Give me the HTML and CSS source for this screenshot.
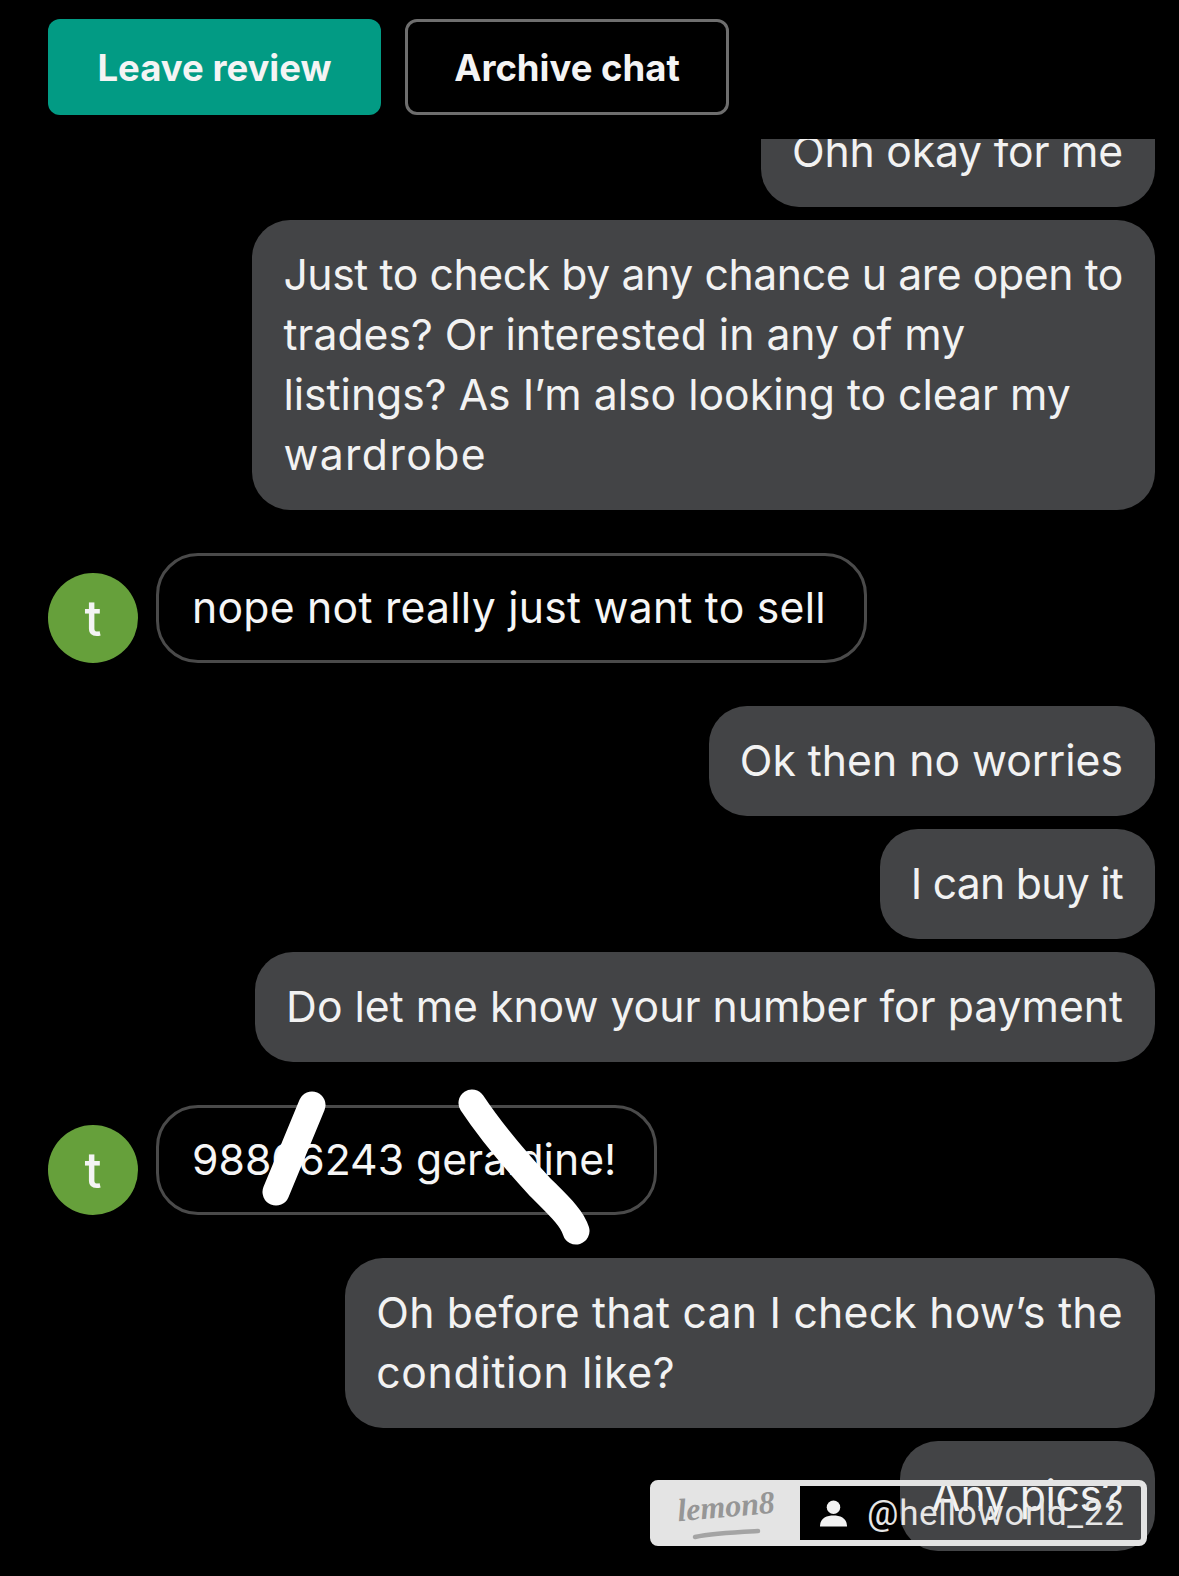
FILE: index.html
```html
<!DOCTYPE html>
<html lang="en">
<head>
<meta charset="utf-8">
<title>Chat</title>
<link rel="stylesheet" href="styles.css">
</head>
<body>
<div class="page">
  <div class="actions">
    <button class="btn btn-primary">Leave review</button>
    <button class="btn btn-outline">Archive chat</button>
  </div>
  <div class="chat">
    <div class="msg sent snug">Ohh okay for me</div>
    <div class="msg sent"><span class="tight">Just to check by any chance u are open to</span><br>trades? Or interested in any of my<br>listings? As I’m also looking to clear my<br><span class="wide">wardrobe</span></div>
    <div class="row">
      <div class="avatar">t</div>
      <div class="msg received loose">nope not really just want to sell</div>
    </div>
    <div class="msg sent after-received">Ok then no worries</div>
    <div class="msg sent tighter">I can buy it</div>
    <div class="msg sent">Do let me know your number for payment</div>
    <div class="row">
      <div class="avatar">t</div>
      <div class="msg received">98806243 geraldine!</div>
    </div>
    <div class="msg sent after-received loose">Oh before that can I check how’s the<br><span class="roomy">condition like?</span></div>
    <div class="msg sent tight">Any pics?</div>
  </div>
  <svg class="scribble" viewBox="0 0 1179 1576" width="1179" height="1576" aria-hidden="true">
    <path d="M312 1105 L276 1192" />
    <path d="M472 1103 C490 1130 515 1160 540 1187 C560 1207 572 1218 576 1231" />
  </svg>
  <div class="watermark">
    <div class="wm-logo">
      <span class="wm-logo-text">lemon8</span>
      <svg class="wm-swoosh" viewBox="0 0 70 12" width="70" height="12" aria-hidden="true"><path d="M3 9 C20 5 45 4 66 3" /></svg>
    </div>
    <div class="wm-user">
      <svg class="wm-icon" viewBox="0 0 26 26" width="27" height="27" aria-hidden="true"><circle cx="13" cy="7" r="6.5"/><path d="M0 25.500 C0 17 7 15 13 15 C19 15 26 17 26 25.500 Z"/></svg>
      <span class="wm-name">@helloworld_22</span>
    </div>
  </div>
</div>
</body>
</html>
```

FILE: styles.css
```css
* { box-sizing: border-box; }
html, body { margin: 0; padding: 0; background: #000; }
.page {
  position: relative;
  width: 1179px;
  height: 1576px;
  overflow: hidden;
  display: flex;
  flex-direction: column;
  background: #000;
  font-family: Inter, "Liberation Sans", sans-serif;
  color: #f2f2f2;
}
.actions {
  display: flex;
  gap: 24px;
  padding: 19px 48px 24px;
  flex: none;
}
.btn {
  height: 96px;
  border-radius: 12px;
  font-family: Inter, sans-serif;
  font-size: 36.5px;
  font-weight: 700;
  color: #f4f4f4;
  background: transparent;
  border: 0;
  padding: 2px 0 0;
}
.btn-primary { width: 333px; background: #029b84; }
.btn-outline { width: 324px; border: 3px solid #6e6e6e; }
.chat {
  flex: 1;
  min-height: 0;
  overflow: hidden;
  display: flex;
  flex-direction: column;
  justify-content: flex-end;
  align-items: flex-end;
  gap: 13px;
  padding: 0 24px 25px 48px;
}
.msg {
  flex: none;
  font-size: 42.7px;
  line-height: 60px;
  padding: 25px 32px 25px 31px;
  border-radius: 38px;
  white-space: nowrap;
}
.snug { letter-spacing: -0.2px; }
.tight { letter-spacing: -0.4px; }
.tighter { letter-spacing: -0.75px; }
.loose { letter-spacing: 0.25px; }
.roomy { letter-spacing: 0.7px; }
.wide { letter-spacing: 1.4px; }
.sent { background: #434446; }
.after-received { margin-top: 30px; }
.row {
  flex: none;
  align-self: stretch;
  display: flex;
  align-items: flex-end;
  gap: 18px;
  margin-top: 30px;
}
.received {
  border: 3px solid #4a4a4a;
  padding: 22px 38px 22px 33px;
  border-radius: 42px;
  color: #f6f6f6;
}
.avatar {
  flex: none;
  width: 90px;
  height: 90px;
  border-radius: 50%;
  background: #66a03b;
  display: flex;
  align-items: center;
  justify-content: center;
  font-size: 50px;
  font-weight: 500;
  color: #f4f4f4;
}
.scribble {
  position: absolute;
  left: 0;
  top: 0;
  pointer-events: none;
}
.scribble path {
  fill: none;
  stroke: #fff;
  stroke-width: 27;
  stroke-linecap: round;
  stroke-linejoin: round;
}
.watermark {
  position: absolute;
  left: 650px;
  top: 1480px;
  width: 497px;
  height: 66px;
  display: flex;
  border: 6px solid #e4e4e4;
  border-radius: 8px;
}
.wm-logo {
  flex: none;
  width: 144px;
  background: #e4e4e4;
  position: relative;
  display: flex;
  align-items: center;
  justify-content: center;
}
.wm-logo-text {
  font-family: "Liberation Serif", serif;
  font-style: italic;
  font-weight: 700;
  font-size: 32px;
  line-height: 32px;
  color: #969696;
  margin-top: -14px;
  margin-left: -4px;
  transform: rotate(-5deg);
}
.wm-swoosh {
  position: absolute;
  left: 36px;
  bottom: 0;
}
.wm-swoosh path {
  fill: none;
  stroke: #a4a4a4;
  stroke-width: 4.500;
  stroke-linecap: round;
}
.wm-user {
  flex: 1;
  display: flex;
  align-items: center;
  gap: 20px;
  padding-left: 20px;
}
.wm-icon { fill: #f2f2f2; flex: none; }
.wm-name {
  font-family: Roboto, sans-serif;
  font-size: 35px;
  letter-spacing: 0.7px;
  color: #e6e6e6;
}
```
